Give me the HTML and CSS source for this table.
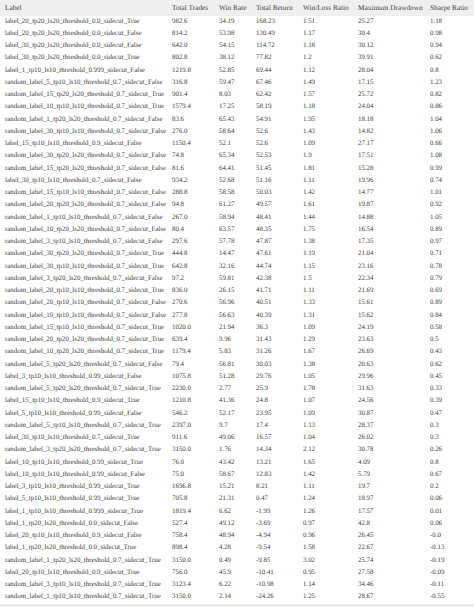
FILE: index.html
```html
<!DOCTYPE html>
<html>
<head>
<meta charset="utf-8">
<link rel="stylesheet" href="styles.css">
</head>
<body>
<table class="results">
<colgroup>
<col class="c-label"><col class="c-trades"><col class="c-win"><col class="c-ret"><col class="c-wl"><col class="c-dd"><col class="c-sharpe">
</colgroup>
<thead>
<tr><th>Label</th><th>Total Trades</th><th>Win Rate</th><th>Total Return</th><th>Win/Loss Ratio</th><th>Maximum Drawdown</th><th>Sharpe Ratio</th></tr>
</thead>
<tbody>
<tr><td>label_20_tp20_ls20_threshold_0.0_sidecut_True</td><td>982.6</td><td>34.19</td><td>168.23</td><td>1.51</td><td>25.27</td><td>1.18</td></tr>
<tr><td>label_20_tp20_ls20_threshold_0.0_sidecut_False</td><td>814.2</td><td>53.98</td><td>130.49</td><td>1.17</td><td>30.4</td><td>0.98</td></tr>
<tr><td>label_30_tp20_ls20_threshold_0.0_sidecut_False</td><td>642.0</td><td>54.15</td><td>114.72</td><td>1.18</td><td>30.12</td><td>0.94</td></tr>
<tr><td>label_30_tp20_ls20_threshold_0.0_sidecut_True</td><td>802.8</td><td>38.12</td><td>77.82</td><td>1.2</td><td>39.91</td><td>0.62</td></tr>
<tr><td>label_1_tp10_ls10_threshold_0.999_sidecut_False</td><td>1219.8</td><td>52.85</td><td>69.44</td><td>1.12</td><td>28.04</td><td>0.8</td></tr>
<tr><td>random_label_5_tp10_ls10_threshold_0.7_sidecut_False</td><td>316.8</td><td>59.47</td><td>67.46</td><td>1.49</td><td>17.15</td><td>1.23</td></tr>
<tr><td>random_label_15_tp20_ls20_threshold_0.7_sidecut_True</td><td>901.4</td><td>8.03</td><td>62.42</td><td>1.57</td><td>25.72</td><td>0.82</td></tr>
<tr><td>random_label_10_tp10_ls10_threshold_0.7_sidecut_True</td><td>1579.4</td><td>17.25</td><td>58.19</td><td>1.18</td><td>24.04</td><td>0.86</td></tr>
<tr><td>random_label_1_tp20_ls20_threshold_0.7_sidecut_False</td><td>83.6</td><td>65.43</td><td>54.91</td><td>1.95</td><td>18.18</td><td>1.04</td></tr>
<tr><td>random_label_30_tp10_ls10_threshold_0.7_sidecut_False</td><td>276.0</td><td>58.64</td><td>52.6</td><td>1.43</td><td>14.82</td><td>1.06</td></tr>
<tr><td>label_15_tp10_ls10_threshold_0.9_sidecut_False</td><td>1150.4</td><td>52.1</td><td>52.6</td><td>1.09</td><td>27.17</td><td>0.66</td></tr>
<tr><td>random_label_30_tp20_ls20_threshold_0.7_sidecut_False</td><td>74.8</td><td>65.34</td><td>52.53</td><td>1.9</td><td>17.51</td><td>1.08</td></tr>
<tr><td>random_label_15_tp20_ls20_threshold_0.7_sidecut_False</td><td>81.6</td><td>64.41</td><td>51.45</td><td>1.81</td><td>15.28</td><td>0.99</td></tr>
<tr><td>label_30_tp10_ls10_threshold_0.7_sidecut_False</td><td>934.2</td><td>52.68</td><td>51.16</td><td>1.11</td><td>19.96</td><td>0.74</td></tr>
<tr><td>random_label_15_tp10_ls10_threshold_0.7_sidecut_False</td><td>288.8</td><td>58.58</td><td>50.03</td><td>1.42</td><td>14.77</td><td>1.01</td></tr>
<tr><td>random_label_20_tp20_ls20_threshold_0.7_sidecut_False</td><td>94.8</td><td>61.27</td><td>49.57</td><td>1.61</td><td>19.87</td><td>0.92</td></tr>
<tr><td>random_label_1_tp10_ls10_threshold_0.7_sidecut_False</td><td>267.0</td><td>58.94</td><td>48.41</td><td>1.44</td><td>14.88</td><td>1.05</td></tr>
<tr><td>random_label_10_tp20_ls20_threshold_0.7_sidecut_False</td><td>80.4</td><td>63.57</td><td>48.35</td><td>1.75</td><td>16.54</td><td>0.89</td></tr>
<tr><td>random_label_3_tp10_ls10_threshold_0.7_sidecut_False</td><td>297.6</td><td>57.78</td><td>47.87</td><td>1.38</td><td>17.35</td><td>0.97</td></tr>
<tr><td>random_label_30_tp20_ls20_threshold_0.7_sidecut_True</td><td>444.8</td><td>14.47</td><td>47.61</td><td>1.19</td><td>21.04</td><td>0.71</td></tr>
<tr><td>random_label_30_tp10_ls10_threshold_0.7_sidecut_True</td><td>642.8</td><td>32.16</td><td>44.74</td><td>1.15</td><td>23.16</td><td>0.78</td></tr>
<tr><td>random_label_3_tp20_ls20_threshold_0.7_sidecut_False</td><td>97.2</td><td>59.81</td><td>42.38</td><td>1.5</td><td>22.34</td><td>0.79</td></tr>
<tr><td>random_label_20_tp10_ls10_threshold_0.7_sidecut_True</td><td>836.0</td><td>26.15</td><td>41.71</td><td>1.11</td><td>21.69</td><td>0.69</td></tr>
<tr><td>random_label_20_tp10_ls10_threshold_0.7_sidecut_False</td><td>270.6</td><td>56.96</td><td>40.51</td><td>1.33</td><td>15.61</td><td>0.89</td></tr>
<tr><td>random_label_10_tp10_ls10_threshold_0.7_sidecut_False</td><td>277.8</td><td>56.63</td><td>40.39</td><td>1.31</td><td>15.62</td><td>0.84</td></tr>
<tr><td>random_label_15_tp10_ls10_threshold_0.7_sidecut_True</td><td>1020.0</td><td>21.94</td><td>36.3</td><td>1.09</td><td>24.19</td><td>0.58</td></tr>
<tr><td>random_label_20_tp20_ls20_threshold_0.7_sidecut_True</td><td>639.4</td><td>9.96</td><td>31.43</td><td>1.29</td><td>23.63</td><td>0.5</td></tr>
<tr><td>random_label_10_tp20_ls20_threshold_0.7_sidecut_True</td><td>1179.4</td><td>5.83</td><td>31.26</td><td>1.67</td><td>26.69</td><td>0.43</td></tr>
<tr><td>random_label_5_tp20_ls20_threshold_0.7_sidecut_False</td><td>79.4</td><td>56.81</td><td>30.03</td><td>1.38</td><td>20.63</td><td>0.62</td></tr>
<tr><td>label_3_tp10_ls10_threshold_0.99_sidecut_False</td><td>1075.8</td><td>51.28</td><td>29.76</td><td>1.05</td><td>29.96</td><td>0.45</td></tr>
<tr><td>random_label_5_tp20_ls20_threshold_0.7_sidecut_True</td><td>2230.0</td><td>2.77</td><td>25.9</td><td>1.78</td><td>31.63</td><td>0.33</td></tr>
<tr><td>label_15_tp10_ls10_threshold_0.9_sidecut_True</td><td>1210.8</td><td>41.36</td><td>24.8</td><td>1.07</td><td>24.56</td><td>0.39</td></tr>
<tr><td>label_5_tp10_ls10_threshold_0.99_sidecut_False</td><td>546.2</td><td>52.17</td><td>23.95</td><td>1.09</td><td>30.87</td><td>0.47</td></tr>
<tr><td>random_label_5_tp10_ls10_threshold_0.7_sidecut_True</td><td>2397.0</td><td>9.7</td><td>17.4</td><td>1.13</td><td>28.37</td><td>0.3</td></tr>
<tr><td>label_30_tp10_ls10_threshold_0.7_sidecut_True</td><td>911.6</td><td>49.06</td><td>16.57</td><td>1.04</td><td>26.02</td><td>0.3</td></tr>
<tr><td>random_label_3_tp20_ls20_threshold_0.7_sidecut_True</td><td>3150.0</td><td>1.76</td><td>14.34</td><td>2.12</td><td>30.78</td><td>0.26</td></tr>
<tr><td>label_10_tp10_ls10_threshold_0.99_sidecut_True</td><td>76.0</td><td>43.42</td><td>13.21</td><td>1.65</td><td>4.09</td><td>0.8</td></tr>
<tr><td>label_10_tp10_ls10_threshold_0.99_sidecut_False</td><td>75.0</td><td>58.67</td><td>12.83</td><td>1.42</td><td>5.79</td><td>0.67</td></tr>
<tr><td>label_3_tp10_ls10_threshold_0.99_sidecut_True</td><td>1696.8</td><td>15.21</td><td>8.21</td><td>1.11</td><td>19.7</td><td>0.2</td></tr>
<tr><td>label_5_tp10_ls10_threshold_0.99_sidecut_True</td><td>705.8</td><td>21.31</td><td>0.47</td><td>1.24</td><td>18.97</td><td>0.06</td></tr>
<tr><td>label_1_tp10_ls10_threshold_0.999_sidecut_True</td><td>1819.4</td><td>6.62</td><td>-1.99</td><td>1.26</td><td>17.57</td><td>0.01</td></tr>
<tr><td>label_1_tp20_ls20_threshold_0.0_sidecut_False</td><td>527.4</td><td>49.12</td><td>-3.69</td><td>0.97</td><td>42.8</td><td>0.06</td></tr>
<tr><td>label_20_tp10_ls10_threshold_0.9_sidecut_False</td><td>758.4</td><td>48.94</td><td>-4.94</td><td>0.96</td><td>26.45</td><td>-0.0</td></tr>
<tr><td>label_1_tp20_ls20_threshold_0.0_sidecut_True</td><td>898.4</td><td>4.28</td><td>-9.54</td><td>1.58</td><td>22.67</td><td>-0.13</td></tr>
<tr><td>random_label_1_tp20_ls20_threshold_0.7_sidecut_True</td><td>3150.0</td><td>0.49</td><td>-9.85</td><td>3.02</td><td>25.74</td><td>-0.19</td></tr>
<tr><td>label_20_tp10_ls10_threshold_0.9_sidecut_True</td><td>756.0</td><td>45.9</td><td>-10.41</td><td>0.95</td><td>27.58</td><td>-0.09</td></tr>
<tr><td>random_label_3_tp10_ls10_threshold_0.7_sidecut_True</td><td>3123.4</td><td>6.22</td><td>-10.98</td><td>1.14</td><td>34.46</td><td>-0.11</td></tr>
<tr><td>random_label_1_tp10_ls10_threshold_0.7_sidecut_True</td><td>3150.0</td><td>2.14</td><td>-24.26</td><td>1.25</td><td>28.67</td><td>-0.55</td></tr>
</tbody>
</table>
</body>
</html>
```

FILE: styles.css
```css
html, body {
  margin: 0;
  padding: 0;
  background: #efefef;
}
body {
  font-family: "Liberation Serif", "Times New Roman", serif;
  color: #404040;
  text-rendering: geometricPrecision;
}
.results {
  width: 474px;
  border-collapse: collapse;
  table-layout: fixed;
  background: #ffffff;
}
.c-label { width: 167px; }
.c-trades { width: 47px; }
.c-win { width: 37px; }
.c-ret { width: 47px; }
.c-wl { width: 55px; }
.c-dd { width: 72px; }
.c-sharpe { width: 49px; }
.results th {
  background: #efefef;
  font-weight: normal;
  font-size: 7.3px;
  text-align: left;
  height: 15.5px;
  padding: 0 0 0 5px;
  white-space: nowrap;
}
.results td {
  font-size: 6.9px;
  height: 12.25px;
  line-height: 12.25px;
  padding: 0 0 0 5px;
  white-space: nowrap;
  box-sizing: border-box;
}
```
